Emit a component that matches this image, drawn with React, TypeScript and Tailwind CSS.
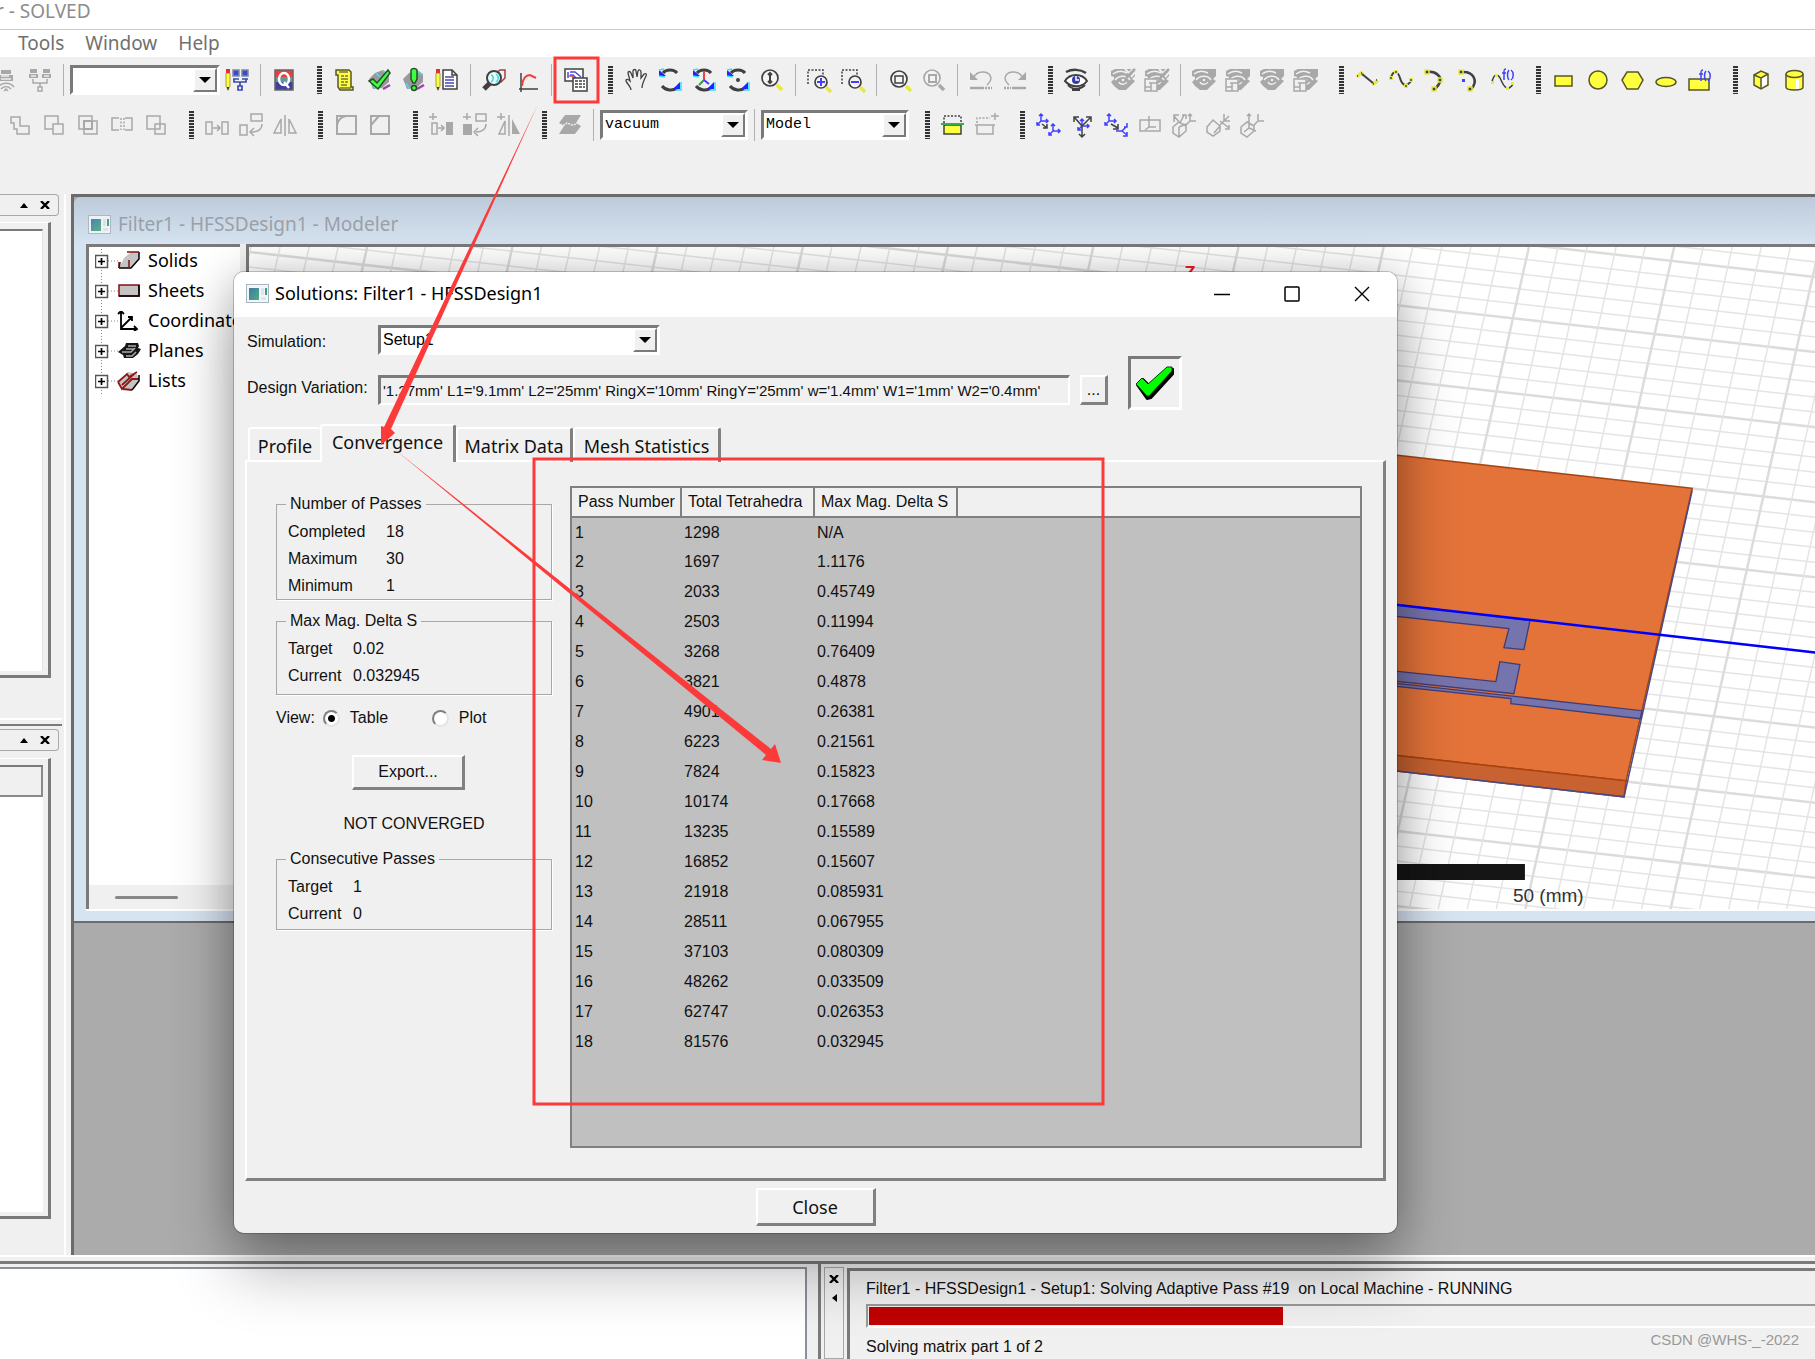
import type { ReactNode } from "react";

const G = "#a8a8a8";
const D = "#404040";
const B = "#4040ff";
const Y = "#ffff40";

const passes = [
  ["1", "1298", "N/A"],
  ["2", "1697", "1.1176"],
  ["3", "2033", "0.45749"],
  ["4", "2503", "0.11994"],
  ["5", "3268", "0.76409"],
  ["6", "3821", "0.4878"],
  ["7", "4901", "0.26381"],
  ["8", "6223", "0.21561"],
  ["9", "7824", "0.15823"],
  ["10", "10174", "0.17668"],
  ["11", "13235", "0.15589"],
  ["12", "16852", "0.15607"],
  ["13", "21918", "0.085931"],
  ["14", "28511", "0.067955"],
  ["15", "37103", "0.080309"],
  ["16", "48262", "0.033509"],
  ["17", "62747", "0.026353"],
  ["18", "81576", "0.032945"],
];

function Tool({ label, children }: { label: string; children: ReactNode }) {
  return (
    <button type="button" aria-label={label} className="flex h-9 w-[34px] shrink-0 items-center justify-center">
      <svg viewBox="0 0 24 24" className="h-6 w-6 overflow-visible" fill="none" strokeWidth="1.5">
        {children}
      </svg>
    </button>
  );
}

function Sep() {
  return <div className="mx-[6px] h-8 w-px shrink-0 bg-[#b0b0b0]" />;
}

function Grip() {
  return (
    <div className="mr-[6px] ml-4 h-7 w-[5px] shrink-0 bg-[repeating-linear-gradient(to_bottom,#333_0px,#333_2px,#e4e4e4_2px,#e4e4e4_3px)]" />
  );
}

function Combo({ id, label, value, className, mono }: { id: string; label?: string; value: string; className: string; mono?: boolean }) {
  return (
    <div className={`flex h-[30px] shrink-0 border-[3px] border-t-[#7a7a7a] border-r-white border-b-white border-l-[#7a7a7a] bg-white ${className}`}>
      <select
        id={id}
        aria-label={label}
        className={`min-w-0 flex-1 appearance-none bg-white text-black outline-none ${mono ? "pl-0.5 font-['Liberation_Mono',monospace] text-[15px]" : "pl-0.5 text-base"}`}
      >
        <option>{value}</option>
      </select>
      <span className="flex w-6 items-center justify-center border-2 border-t-white border-r-[#7a7a7a] border-b-[#7a7a7a] border-l-white bg-[#f0f0f0]">
        <svg viewBox="0 0 12 6" className="h-[6px] w-3">
          <path d="M0 0h12L6 6z" fill="#000" />
        </svg>
      </span>
    </div>
  );
}

function AppIcon({ faded }: { faded?: boolean }) {
  return (
    <svg viewBox="0 0 23 19" className={`h-[19px] w-[23px] shrink-0 ${faded ? "opacity-90" : ""}`}>
      <defs>
        <linearGradient id="scr" x1="0" y1="0" x2="1" y2="1">
          <stop offset="0" stopColor="#3c7ba8" />
          <stop offset="1" stopColor="#4fae7c" />
        </linearGradient>
      </defs>
      <rect x="0.5" y="0.5" width="22" height="18" fill="#f3f6f9" stroke="#a9b4be" />
      <rect x="3" y="4" width="10" height="12" fill="url(#scr)" />
      <path d="M15 4h3v7h-3zM15 13h5v3h-5z" fill="#e0e4e8" />
      <path d="M20 4v7" stroke="#3f9a86" strokeWidth="2" />
    </svg>
  );
}

/* pieces shared by the toolbar glyphs */
const Eye = () => (
  <g>
    <path d="M0 3l4-2h20v7l-3 3 3 2-5 5-4 4H8l-5-4-3-4 3-3V9L0 8z" fill={G} />
    <path d="M2 6c5-4 10-3 14-1" stroke="#f0f0f0" strokeWidth="1.6" />
    <path d="M4 12c4-5 12-5 15 0" stroke="#f0f0f0" strokeWidth="1.6" />
    <path d="M8 14c1 3 6 3 8 0" stroke="#f0f0f0" strokeWidth="1.3" />
    <circle cx="12" cy="12" r="1.3" fill="#f0f0f0" />
  </g>
);
const Block = () => <path d="M0 11h12v12H0zM4 15h8M6 15v8M0 19h6" fill="#f0f0f0" stroke={G} />;
const CloseMark = () => (
  <g stroke={G}>
    <path d="M14 1l4 4 4-4M20 9l5-6" stroke="#f0f0f0" strokeWidth="2" />
    <path d="M15 10l9-9" strokeWidth="2.5" />
  </g>
);
const Axis = ({ x, y, c }: { x: number; y: number; c: string }) => (
  <path
    d="M0 -7v7h7M0 0l-4 4M-2 -5l2 -2 2 2M5 -2l2 2-2 2M-4 1v3h3"
    transform={`translate(${x} ${y})`}
    stroke={c}
  />
);
const Lens = ({ x, y, r, c, h }: { x: number; y: number; r: number; c: string; h: string }) => (
  <g>
    <path d={`M${x + r - 1} ${y + r - 1}l5 5`} stroke={h} strokeWidth="3.5" />
    <circle cx={x} cy={y} r={r} stroke={c} strokeWidth="1.7" fill="#f4f4f4" />
  </g>
);
const Spin = ({ children }: { children?: ReactNode }) => (
  <g>
    <path d="M5 5c3-4 11-4 14 0" stroke={D} strokeWidth="3" />
    <path d="M4 18c4 5 11 5 15 2" stroke={D} strokeWidth="3" />
    <path d="M1 2v6h7z" fill="#2222ff" />
    <path d="M1 2l5-1M1 8l6 1" stroke="#30e0ff" />
    <path d="M22 14v7h-7z" fill="#2222ff" />
    <path d="M23 14v8h-5" stroke="#30e0ff" />
    {children}
  </g>
);
const Cubes = () => (
  <g>
    <path d="M2 11l6-6 8-3 6 4v8l-7 6-9 1z" fill="#9a9a9a" />
    <path d="M5 15l3 5M9 5l4 4M16 3l5 4" stroke="#40e0f0" />
    <path d="M16 21l7-4" stroke="#a040b0" strokeWidth="2.5" />
  </g>
);
const Pencil = () => (
  <g>
    <path d="M1 5h4v13l-2 4-2-4z" fill={Y} stroke="#8a8a30" strokeWidth="0.8" />
    <path d="M1 1h4v4H1z" fill="#e03030" />
    <path d="M2 19h2l-1 4z" fill="#222" />
  </g>
);

function ToolbarOne() {
  return (
    <div className="-ml-[11px] flex h-[46px] items-center">
      <Tool label="Solve node">
        <path d="M7 2h10v4H7zM5 7h14v6H5z" fill={G} />
        <path d="M7 8h8M7 11h10" stroke="#eee" />
        <path d="M4 19c4-5 12-5 16 0M7 21c3-3 7-3 10 0M10 23l2-2 2 2" stroke={G} />
      </Tool>
      <Tool label="Distribute">
        <path d="M2 1h7v4H2zM15 1h7v4h-7zM1 6h9v4H1zM14 6h9v4h-9z" fill={G} />
        <path d="M5 11v4h14v-4M12 15v4M10 19h4v4h-4z" stroke={G} />
        <path d="M3 8h5M16 8h5" stroke="#eee" />
      </Tool>
      <Sep />
      <Combo id="machine" label="Machine" value="" className="w-[150px]" />
      <Tool label="Edit configuration">
        <Pencil />
        <path d="M8 2h6v6H8zM17 2h6v6h-6z" fill="#3a4ad0" stroke="#8088a0" />
        <path d="M9 11v3h12v-3M15 14v4M13 18h4v4h-4zM8 11h6M17 11h6" stroke="#3a4ab0" strokeWidth="1.7" />
      </Tool>
      <Sep />
      <Tool label="Queue">
        <path d="M3 2h18v7H3z" fill="#f03c3c" />
        <path d="M3 9h18v5H3z" fill="#5a9c98" />
        <path d="M3 14h18v8H3z" fill="#40409c" />
        <path d="M3 2h18v20H3z" stroke="#666" />
        <ellipse cx="12" cy="11" rx="5" ry="6" stroke="#fff" strokeWidth="2.5" />
        <path d="M12 14l5 6" stroke="#fff" strokeWidth="2.5" />
      </Tool>
      <Grip />
      <Tool label="Log">
        <path d="M3 2h13l2 2v15h2v3H7l-2-3V7H3z" fill={Y} stroke="#55552a" />
        <path d="M6 4h9M8 8h3M12 8h3M8 11h7M8 14h3M12 14h3M8 17h6M7 20h11" stroke="#77773a" />
      </Tool>
      <Tool label="Validate">
        <Cubes />
        <path d="M2 13l4-2 4 4L21 2l2 3L11 21z" fill="#40ff40" stroke="#265026" />
      </Tool>
      <Tool label="Analyze">
        <Cubes />
        <path d="M10 2c1-2 5-2 6 0v9l-2 4h-2l-2-4z" fill="#40ff40" stroke="#265026" />
        <circle cx="13" cy="20" r="2.5" fill="#40ff40" stroke="#265026" />
      </Tool>
      <Tool label="Notes">
        <Pencil />
        <path d="M8 2h9l5 5v14H8z" fill="#fff" stroke={D} />
        <path d="M17 2v5h5" stroke={D} />
        <path d="M10 9h9M10 12h9M10 15h9M10 18h9" stroke="#4a4ab0" />
      </Tool>
      <Sep />
      <Tool label="Inspect">
        <path d="M14 5l4-3h5v8l-4 4z" stroke="#a04040" />
        <path d="M9 14l-7 7" stroke={D} strokeWidth="5" />
        <circle cx="12" cy="10" r="7" stroke={D} strokeWidth="2" fill="#e8fbfb" />
        <path d="M9 7c3 1 3 5 0 7M14 6c3 2 3 6 0 8" stroke="#40d8e8" />
      </Tool>
      <Tool label="Report">
        <path d="M5 5v19M3 21h19" stroke={D} />
        <path d="M6 18c1-9 4-11 8-11l6 3" stroke="#f04040" strokeWidth="2" />
      </Tool>
      <Sep />
      <Tool label="Solution data">
        <path d="M2 1h18v12H2z" stroke={D} fill="#fff" />
        <path d="M5 4v6M7 4h5l6 5M7 7h3l3 3" stroke="#4a4ae0" />
        <path d="M6 8h3l3 3" stroke="#f04040" />
        <path d="M10 10h14v13H10z" stroke={D} fill="#fff" />
        <path d="M12 13h10M12 16h10M12 19h10" stroke={D} strokeDasharray="3 1" />
      </Tool>
      <Grip />
      <Tool label="Pan">
        <path d="M7 22c0-4-6-8-5-10s4 1 4 1L4 5c0-2 2-2 3 0l2 5V3c0-2 3-2 3 0l1 6 1-6c1-2 3-1 3 1v6l3-4c2-1 3 0 2 2-2 4-4 8-4 12" stroke={D} strokeWidth="1.3" />
      </Tool>
      <Tool label="Rotate around model center">
        <Spin />
      </Tool>
      <Tool label="Rotate around current axis">
        <Spin>
          <path d="M12 3v10" stroke="#f04040" strokeWidth="2" />
          <path d="M12 12l-5 5" stroke="#30a030" strokeWidth="2" />
          <path d="M12 12l5 4" stroke="#4040ff" strokeWidth="2" />
        </Spin>
      </Tool>
      <Tool label="Rotate around screen center">
        <Spin>
          <circle cx="12" cy="12" r="2" fill={D} />
        </Spin>
      </Tool>
      <Tool label="Dynamic zoom">
        <Lens x={10} y={10} r={8} c={D} h="#e8e840" />
        <path d="M10 5v10M8 7l2-2 2 2M8 13l2 2 2-2" stroke={D} strokeWidth="2" />
      </Tool>
      <Sep />
      <Tool label="Zoom in">
        <path d="M1 16V2h15v5" stroke={D} strokeDasharray="2 1.5" />
        <Lens x={14} y={14} r={6} c={D} h="#e8e840" />
        <path d="M14 10v8M10 14h8" stroke={B} strokeWidth="2" />
      </Tool>
      <Tool label="Zoom out">
        <path d="M1 16V2h15v5" stroke={D} strokeDasharray="2 1.5" />
        <Lens x={14} y={14} r={6} c={D} h="#e8e840" />
        <path d="M10 14h8" stroke={B} strokeWidth="2" />
      </Tool>
      <Sep />
      <Tool label="Fit all">
        <Lens x={11} y={11} r={8} c={D} h="#e8e840" />
        <path d="M7 8h8v7H7z" stroke={D} />
      </Tool>
      <Tool label="Fit selection">
        <Lens x={10} y={10} r={8} c={G} h={G} />
        <path d="M7 7h7v7H7z" stroke={G} strokeWidth="2" />
      </Tool>
      <Sep />
      <Tool label="Undo">
        <path d="M4 10c5-9 17-7 18 0 0 4-2 5-4 7" stroke={G} />
        <path d="M1 4v8h8z" fill={G} />
        <path d="M1 20h14" stroke={G} strokeWidth="2.5" />
        <path d="M16 20h7" stroke={G} strokeDasharray="2 1" strokeWidth="2.5" />
      </Tool>
      <Tool label="Redo">
        <path d="M20 10C15 1 3 3 2 10c0 4 2 5 4 7" stroke={G} />
        <path d="M23 4v8h-8z" fill={G} />
        <path d="M9 20h14" stroke={G} strokeWidth="2.5" />
        <path d="M1 20h7" stroke={G} strokeDasharray="2 1" strokeWidth="2.5" />
      </Tool>
      <Grip />
      <Tool label="Visibility">
        <path d="M2 4c6-3 14-3 20 1" stroke={D} strokeWidth="2.5" />
        <path d="M1 13c5-8 17-8 22 0-5 7-16 7-22 0z" fill="#fff" stroke={D} strokeWidth="2" />
        <circle cx="12" cy="12" r="4" fill="#3a3ab0" />
        <path d="M12 8v4h3" stroke="#fff" />
        <path d="M4 17c4 5 12 5 17 0M8 22h8" stroke={D} strokeWidth="2" />
      </Tool>
      <Sep />
      <Tool label="Hide selection">
        <Eye />
        <CloseMark />
      </Tool>
      <Tool label="Hide selection in active view">
        <Eye />
        <CloseMark />
        <Block />
      </Tool>
      <Sep />
      <Tool label="Show selection">
        <Eye />
      </Tool>
      <Tool label="Show selection in active view">
        <Eye />
        <Block />
      </Tool>
      <Tool label="Show all">
        <Eye />
      </Tool>
      <Tool label="Show all in active view">
        <Eye />
        <Block />
      </Tool>
      <Grip />
      <Tool label="Draw line">
        <path d="M2 9l4-4 2 2M17 16l3-1 3-3" stroke="#e8e840" strokeWidth="3.5" />
        <path d="M7 6l11 9" stroke={D} strokeWidth="2" />
        <path d="M2 8h1M6 5h1M18 16h1M21 12h1" stroke={D} />
      </Tool>
      <Tool label="Draw spline">
        <path d="M2 10c2-8 7-7 9 0s6 10 11 3" stroke={D} strokeWidth="2" />
        <path d="M0 8h4v4H0zM5 2h4v4H5zM15 16h4v4h-4zM20 10h4v4h-4z" fill="#e8e840" />
        <path d="M1 10h2M6 4h2M16 18h2M21 12h2" stroke={D} />
      </Tool>
      <Tool label="Draw arc">
        <path d="M5 4c8-1 14 5 12 10-1 3-3 5-5 7" stroke={D} strokeWidth="2.5" />
        <path d="M2 2h4v4H2zM15 10h4v4h-4zM9 19h4v4H9z" fill={D} stroke="#e8e840" />
      </Tool>
      <Tool label="Draw center arc">
        <path d="M5 4c11-1 17 9 9 17" stroke={D} strokeWidth="2.5" />
        <path d="M2 2h4v4H2zM11 19h4v4h-4z" fill={D} stroke="#e8e840" />
        <path d="M5 11h3v3H5z" fill={B} />
      </Tool>
      <Tool label="Draw equation curve">
        <path d="M1 14c2-9 6-9 9-2s7 12 12 4" stroke={D} />
        <path d="M0 13h3v3H0zM4 6h3v3H4zM15 19h3v3h-3zM20 14h3v3h-3z" fill="#e8e840" />
        <path d="M15 1c-2 0-2 1-2 3v8M11 5h4M18 2c-2 2-2 8 0 10M20 2c3 2 3 8 0 10" stroke={B} />
      </Tool>
      <Grip />
      <Tool label="Draw rectangle">
        <path d="M3 8h17v10H3z" fill={Y} stroke="#55552a" />
      </Tool>
      <Tool label="Draw circle">
        <circle cx="12" cy="12" r="9" fill={Y} stroke="#55552a" />
      </Tool>
      <Tool label="Draw regular polygon">
        <path d="M7 4h11l5 8-5 9H7l-5-9z" fill={Y} stroke="#55552a" />
      </Tool>
      <Tool label="Draw ellipse">
        <ellipse cx="12" cy="14" rx="10" ry="4.5" fill={Y} stroke="#55552a" />
      </Tool>
      <Tool label="Draw equation surface">
        <path d="M1 11h20v11H1z" fill={Y} stroke="#55552a" />
        <path d="M15 2c-2 0-2 1-2 3v8M11 6h4M18 3c-2 2-2 8 0 10M20 3c3 2 3 8 0 10" stroke={B} />
      </Tool>
      <Grip />
      <Tool label="Draw box">
        <path d="M5 7l7-4 7 3v11l-7 4-7-4z" fill={Y} stroke="#55552a" />
        <path d="M12 10l6-3v9l-6 4z" fill="#fff" />
        <path d="M5 7l7 3 7-4M12 10v11" stroke="#55552a" />
      </Tool>
      <Tool label="Draw cylinder">
        <path d="M3 6v13c0 4 17 4 17 0V6" fill={Y} stroke="#55552a" />
        <path d="M13 11h3v10h-3z" fill="#fff" />
        <ellipse cx="11.5" cy="6" rx="8.5" ry="3.5" fill={Y} stroke="#55552a" />
      </Tool>
    </div>
  );
}

function ToolbarTwo() {
  return (
    <div className="ml-[3px] flex h-[44px] items-center">
      <Tool label="Unite">
        <path d="M3 4h9v9h9v8H9v-5H6v-6H3z" stroke={G} />
      </Tool>
      <Tool label="Subtract">
        <path d="M3 3h13v8h5v10H11v-5H3zM11 16v-5h5" stroke={G} />
      </Tool>
      <Tool label="Intersect">
        <path d="M3 3h13v13H3zM8 8h13v13H8z" stroke={G} />
        <path d="M8 8h8v8H8z" stroke={G} strokeWidth="2" />
      </Tool>
      <Tool label="Split">
        <path d="M9 5H2v12h7M15 5h7v12h-7" stroke={G} />
        <path d="M11 5v12M14 5v12" stroke={G} strokeDasharray="2 1.5" />
      </Tool>
      <Tool label="Imprint">
        <path d="M3 3h13v13H3zM11 11h10v10H11zM11 11h5v5h-5z" stroke={G} />
      </Tool>
      <Grip />
      <Tool label="Move">
        <path d="M1 9h6v12H1zM17 9h6v12h-6zM8 15h7M12 12l3 3-3 3" stroke={G} />
      </Tool>
      <Tool label="Rotate">
        <path d="M12 1h11v7H12zM1 12h7v10H1zM23 11c0 5-4 8-11 8M15 15l-4 4 4 4" stroke={G} />
      </Tool>
      <Tool label="Mirror">
        <path d="M8 6v14H1zM16 6v14h7zM12 2v21" stroke={G} />
      </Tool>
      <Grip />
      <Tool label="Fillet">
        <path d="M3 3h19v18H3zM3 12c1-6 4-8 9-9" stroke={G} strokeWidth="2" />
      </Tool>
      <Tool label="Chamfer">
        <path d="M3 3h18v18H3zM3 12l8-9" stroke={G} strokeWidth="2" />
      </Tool>
      <Grip />
      <Tool label="Duplicate along line">
        <path d="M4 0v7M0 4h8M3 10h5v11H3zM9 15h6M12 12l3 3-3 3" stroke={G} />
        <path d="M17 9h7v13h-7z" fill={G} />
      </Tool>
      <Tool label="Duplicate around axis">
        <path d="M4 0v7M0 4h8M13 1h10v7H13zM23 11c0 5-4 8-10 8M15 15l-4 4 4 4" stroke={G} />
        <path d="M0 11h9v11H0z" fill={G} />
      </Tool>
      <Tool label="Duplicate mirror">
        <path d="M4 0v7M0 4h8M8 8v13H2zM12 2v21" stroke={G} />
        <path d="M15 6v15h8z" fill={G} />
      </Tool>
      <Grip />
      <Tool label="Thicken sheet">
        <path d="M7 2h16l-5 8 5 3-6 8H1l5-8-5-3z" fill={G} />
        <path d="M2 12h5l2-2 5 2 5-1" stroke="#eee" strokeDasharray="2 1" />
      </Tool>
      <Sep />
      <Combo id="material" label="Material" value="vacuum" className="w-[148px]" mono />
      <Sep />
      <Combo id="model-type" label="Model type" value="Model" className="w-[148px]" mono />
      <Grip />
      <Tool label="Section">
        <path d="M3 10V3h17v7" stroke={D} strokeDasharray="2 1.5" />
        <path d="M3 12h17v9H3z" fill={Y} stroke={D} />
        <path d="M0 11h23" stroke="#30b050" strokeWidth="2" />
      </Tool>
      <Tool label="Add section">
        <path d="M2 10V5h13" stroke={G} strokeDasharray="2 1.5" />
        <path d="M2 12h16v9H2zM0 12h20M20 0v7M16 3h8" stroke={G} />
      </Tool>
      <Grip />
      <Tool label="Offset coordinate system">
        <Axis x={5} y={8} c={B} />
        <Axis x={17} y={18} c={B} />
        <path d="M6 11l5 4M11 11v4H7" stroke={D} />
      </Tool>
      <Tool label="Rotated coordinate system">
        <Axis x={12} y={13} c={B} />
        <path d="M12 13L5 5M12 13l8-8M12 13v10M4 9V4h5M16 4h5v5M9 21l3 3 3-3" stroke={D} />
      </Tool>
      <Tool label="Offset and rotated coordinate system">
        <Axis x={5} y={8} c={B} />
        <path d="M7 11l7 4M14 11v5H9" stroke={D} />
        <path d="M23 13l-5 5 5 4M18 18h-6M23 10v4h-3M23 19v4h-4" stroke={B} />
      </Tool>
      <Tool label="Face coordinate system">
        <path d="M2 7h20v11H2zM11 3v11h7M11 14l-4 3" stroke={G} />
      </Tool>
      <Tool label="Edge coordinate system">
        <path d="M1 14l6-5 7 4v5l-7 6-6-4zM7 14l7-3M7 14v9M2 9V2h5M2 3l6 7M12 2l-4 8M10 2h4v4M18 1v7h6M18 8l-4 4M16 3l2-2 2 2" stroke={G} />
      </Tool>
      <Tool label="Object coordinate system">
        <path d="M1 14l6-7 7 6v5l-7 5-6-4zM14 13l-6 7M18 1v7h6M23 3l-9 9M14 8l9 7M23 12v4h-4" stroke={G} />
      </Tool>
      <Tool label="Relative coordinate system">
        <path d="M1 14l6-5 7 4v5l-7 6-6-4zM9 1v14l-5 4M9 15l7 3M18 1v7h6M18 8l-4 4M7 3l2-2 2 2" stroke={G} />
      </Tool>
    </div>
  );
}

function DockHeader() {
  return (
    <div className="flex h-[22px] w-[59px] items-center justify-end gap-3 rounded-r-sm border border-l-0 border-[#a8a8a8] pr-2">
      <button type="button" aria-label="Expand">
        <svg viewBox="0 0 8 5" className="h-[5px] w-2">
          <path d="M0 5l4-5 4 5z" />
        </svg>
      </button>
      <button type="button" aria-label="Close panel">
        <svg viewBox="0 0 10 8" className="h-2 w-[10px]" stroke="#000" strokeWidth="2.4">
          <path d="M1 0l8 8M9 0L1 8" />
        </svg>
      </button>
    </div>
  );
}

function LeftDock() {
  return (
    <div className="flex w-[66px] shrink-0 flex-col border-r-2 border-white">
      <DockHeader />
      <div className="mt-[6px] h-[456px] w-[51px] border-t border-r-[3px] border-b-[3px] border-t-white border-r-[#7a7a7a] border-b-[#7a7a7a] pt-[6px] pr-[5px] pb-1">
        <div className="h-full border-t-2 border-r border-t-[#7a7a7a] border-r-[#e4e4e4] bg-white" />
      </div>
      <div className="mt-[40px] mb-[3px] h-[8px] w-[62px] border-t-2 border-b-2 border-t-white border-b-[#7a7a7a]" />
      <DockHeader />
      <div className="mt-[7px] h-[461px] w-[51px] border-t border-r-[3px] border-b-[3px] border-t-white border-r-[#7a7a7a] border-b-[#7a7a7a] pt-[6px] pr-[5px] pb-1">
        <div className="h-full border-t-2 border-t-[#7a7a7a] bg-white">
          <div className="h-[30px] border-r-2 border-b-2 border-[#8a8a8a] bg-[#f0f0f0]" />
        </div>
      </div>
    </div>
  );
}

const treeItems: { name: string; icon: ReactNode }[] = [
  {
    name: "Solids",
    icon: (
      <>
        <path d="M2 17L7 7l7-6h8v6l-8 10z" fill="#c4c4c4" />
        <path d="M2 17h12l8-9V1M2 17l1-6" stroke="#000" />
        <path d="M10 1h12M2 11v6M12 9v7" stroke="#801010" />
      </>
    ),
  },
  {
    name: "Sheets",
    icon: (
      <>
        <path d="M2 4h20v11H2z" fill="#c4c4c4" stroke="#801010" />
        <path d="M2 15h20V4" stroke="#000" />
      </>
    ),
  },
  {
    name: "Coordinate Systems",
    icon: <path d="M4 0v18h16M1 3l3-3 3 3M17 15l3 3-3 2M4 17L15 6M11 6h4v4" stroke="#000" strokeWidth="1.8" />,
  },
  {
    name: "Planes",
    icon: (
      <>
        <path d="M1 11l7-6 1-3h12l1 3-1 2 3 1-3 5-5 4H7l-1-3z" fill="#161616" />
        <path d="M5 11h9l4-4M9 8h8M11 5h8M9 15h6l4-4" stroke="#aaa" />
      </>
    ),
  },
  {
    name: "Lists",
    icon: (
      <>
        <path d="M1 11L11 1l9 2 2 7-8 9-9-1z" fill="#c4c4c4" />
        <path d="M1 11l4 7 10-10h7M1 11l9-8 2 3 8-5M5 14L17 3M6 18l9 1" stroke="#901818" strokeWidth="1.8" />
        <path d="M15 19l7-9V4" stroke="#000" />
      </>
    ),
  },
];

function ModelTree() {
  return (
    <div className="flex w-[154px] shrink-0 flex-col border-t-[3px] border-l-[3px] border-[#7a7a7a] bg-white">
      <ul className="-mt-px flex-1 overflow-hidden">
        {treeItems.map((t) => (
          <li key={t.name} className="flex h-[30px] items-center">
            <button type="button" aria-label={`Expand ${t.name}`} className="ml-[6px] shrink-0">
              <svg viewBox="0 0 24 30" className="block h-[30px] w-6" fill="none">
                <path d="M6.5 0v30M13 15h11" stroke="#888" strokeDasharray="1 2" />
                <path d="M.5 9.500h12v12H.5z" fill="#fff" stroke="#555" strokeWidth="1.5" />
                <path d="M3 15.500h7M6.500 12v7" stroke="#000" strokeWidth="1.7" />
              </svg>
            </button>
            <svg viewBox="0 0 24 20" className="-ml-0.5 h-5 w-6 shrink-0" fill="none" strokeWidth="1.5">
              {t.icon}
            </svg>
            <span className="ml-[7px] pb-0.5 font-['Noto_Sans',sans-serif] text-lg whitespace-nowrap text-black">{t.name}</span>
          </li>
        ))}
      </ul>
      <div className="flex h-6 items-center bg-[#f0f0f0] pl-[26px]">
        <div className="h-[3px] w-[63px] rounded bg-[#888]" />
      </div>
    </div>
  );
}

function Viewport() {
  const rows = Array.from({ length: 66 }, (_, i) => i - 34);
  const cols = Array.from({ length: 72 }, (_, i) => i - 50);
  return (
    <div className="min-w-0 flex-1 overflow-hidden border-t-[3px] border-l-[3px] border-[#7a7a7a] bg-white">
      <svg viewBox="250 247 1565 661" preserveAspectRatio="xMinYMin slice" className="h-full w-full" fill="none">
        {rows.map((k) => (
          <path
            key={`r${k}`}
            d={`M215 ${652 + 15 * k - 179}L1815 ${652 + 15 * k}`}
            stroke={k % 5 === 0 ? "#dcdcdc" : "#e4e4e4"}
            strokeWidth={k % 5 === 0 ? 2.5 : 1.5}
          />
        ))}
        {cols.map((k) => (
          <path
            key={`c${k}`}
            d={`M${1673 + 29 * k} 247L${1673 + 29 * k - 149} 910`}
            stroke={k % 5 === 0 ? "#dcdcdc" : "#e4e4e4"}
            strokeWidth={k % 5 === 0 ? 2.5 : 1.5}
          />
        ))}
        <path d="M1200 433L1691 488L1625 780L1200 733z" fill="#e37339" stroke="#a8430e" strokeWidth="1.5" />
        <path d="M1200 733L1625 780L1623 796L1200 748z" fill="#c86231" stroke="#a8430e" strokeWidth="1.5" />
        <path d="M1200 748L1623 796L1691 490" stroke="#4a4a88" strokeWidth="1.5" />
        <g fill="#7674ac" stroke="#3f3c78" strokeWidth="1.3">
          <path d="M1380 602l149 18-6 29-20-2 5-19-128-14z" />
          <path d="M1380 669l115 12 4-20 20 3-6 29-133-14z" />
          <path d="M1380 681l136 15 125 14-2 8-129-15v-5l-130-14z" />
        </g>
        <path d="M1200 582L1815 652" stroke="#0000ff" strokeWidth="2.5" />
        <path d="M1200 863h324v16h-324z" fill="#151515" />
        <text x="1512" y="901" fontSize="19" fill="#333" className="font-['Liberation_Sans',sans-serif]">
          50 (mm)
        </text>
        <text x="1184" y="279" fontSize="18" fontWeight="bold" fill="#ee1c1c" className="font-['Liberation_Sans',sans-serif]">
          Z
        </text>
      </svg>
    </div>
  );
}

function Group({ title, rows, wide, className }: { title: string; rows: string[][]; wide?: boolean; className: string }) {
  return (
    <fieldset className={`border border-[#a8a8a8] pl-[11px] shadow-[1px_1px_0_#fff] ${className}`}>
      <legend className="-ml-[2px] px-1 leading-6">{title}</legend>
      <dl className="pt-0.5">
        {rows.map(([k, v]) => (
          <div key={k} className="flex leading-[27px]">
            <dt className={wide ? "w-[98px]" : "w-[65px]"}>{k}</dt>
            <dd>{v}</dd>
          </div>
        ))}
      </dl>
    </fieldset>
  );
}

const radioClass =
  "mx-2 h-[17px] w-[17px] appearance-none rounded-full border-2 border-t-[#808080] border-r-[#e4e4e4] border-b-[#e4e4e4] border-l-[#808080] bg-white checked:bg-[radial-gradient(circle,#000_3px,#fff_4px)]";

const raised = "border-t-2 border-r-[3px] border-b-[3px] border-l-2 border-t-white border-r-[#808080] border-b-[#808080] border-l-white bg-[#f0f0f0]";

function ConvergencePanel() {
  return (
    <div className="flex flex-1 border-t-2 border-r-[3px] border-b-[3px] border-l-2 border-t-white border-r-[#808080] border-b-[#808080] border-l-white">
      <div className="ml-[29px] w-[276px] shrink-0 pt-[30px]">
        <Group
          title="Number of Passes"
          rows={[
            ["Completed", "18"],
            ["Maximum", "30"],
            ["Minimum", "1"],
          ]}
          wide
          className=""
        />
        <Group
          title="Max Mag. Delta S"
          rows={[
            ["Target", "0.02"],
            ["Current", "0.032945"],
          ]}
          className="mt-[9px] pb-[5px]"
        />
        <div className="mt-2 flex h-[30px] items-center">
          <span>View:</span>
          <input type="radio" id="view-table" name="view" defaultChecked className={radioClass} />
          <label htmlFor="view-table" className="w-[76px] pl-0.5">
            Table
          </label>
          <input type="radio" id="view-plot" name="view" className={radioClass} />
          <label htmlFor="view-plot" className="pl-0.5">
            Plot
          </label>
        </div>
        <button type="button" className={`mt-[22px] ml-[76px] h-[35px] w-[113px] ${raised}`}>
          Export...
        </button>
        <p className="mt-[22px] text-center leading-6">NOT CONVERGED</p>
        <Group
          title="Consecutive Passes"
          rows={[
            ["Target", "1"],
            ["Current", "0"],
          ]}
          className="mt-[11px] pb-0.5"
        />
      </div>
      <div className="mt-6 mr-[21px] mb-[30px] ml-[18px] flex-1 border-2 border-[#808080] bg-[#c0c0c0]">
        <table className="w-full table-fixed border-collapse text-left">
          <thead>
            <tr className="h-[29px] bg-[#f0f0f0]">
              <th className="w-[109px] border-r-2 border-b-2 border-[#808080] pl-[6px] font-normal">Pass Number</th>
              <th className="w-[133px] border-r-2 border-b-2 border-[#808080] pl-[6px] font-normal">Total Tetrahedra</th>
              <th className="w-[143px] border-r-2 border-b-2 border-[#808080] pl-[6px] font-normal">Max Mag. Delta S</th>
              <th className="border-b-2 border-[#808080]" />
            </tr>
          </thead>
          <tbody>
            {passes.map((p) => (
              <tr key={p[0]} className="h-[30px]">
                <td className="pl-[3px]">{p[0]}</td>
                <td className="pl-[3px]">{p[1]}</td>
                <td className="pl-[3px]">{p[2]}</td>
                <td />
              </tr>
            ))}
          </tbody>
        </table>
      </div>
    </div>
  );
}

function SolutionsDialog() {
  const tab = "shrink-0 border-t-2 border-l-2 border-t-white border-l-white px-1 rounded-t-[3px]";
  return (
    <div
      role="dialog"
      aria-label="Solutions"
      className="absolute top-[272px] left-[234px] isolate flex h-[961px] w-[1163px] flex-col overflow-hidden rounded-[10px] bg-[#f0f0f0]"
    >
      <div className="flex h-[45px] shrink-0 items-center bg-white pb-0.5 pl-3">
        <AppIcon />
        <h1 className="ml-[6px] flex-1 pb-0.5 font-['Noto_Sans',sans-serif] text-lg text-black">Solutions: Filter1 - HFSSDesign1</h1>
        <button type="button" aria-label="Minimize" className="flex w-[70px] justify-center">
          <svg viewBox="0 0 16 16" className="h-4 w-4" stroke="#000" strokeWidth="1.3">
            <path d="M0 8.500h16" />
          </svg>
        </button>
        <button type="button" aria-label="Maximize" className="flex w-[70px] justify-center">
          <svg viewBox="0 0 16 16" className="h-4 w-4" stroke="#000" strokeWidth="1.5" fill="none">
            <rect x="1" y="1" width="14" height="14" rx="1" />
          </svg>
        </button>
        <button type="button" aria-label="Close window" className="flex w-[70px] justify-center">
          <svg viewBox="0 0 16 16" className="h-4 w-4" stroke="#000" strokeWidth="1.4">
            <path d="M1 1l14 14M15 1L1 15" />
          </svg>
        </button>
      </div>

      <div className="flex h-[107px] shrink-0 pl-[13px]">
        <div className="w-[861px] pt-2">
          <div className="flex items-center">
            <label htmlFor="simulation" className="w-[131px] pt-1">
              Simulation:
            </label>
            <Combo id="simulation" value="Setup1" className="w-[282px]" />
          </div>
          <div className="mt-5 flex items-center">
            <label htmlFor="variation" className="w-[131px] shrink-0 pb-1">
              Design Variation:
            </label>
            <input
              id="variation"
              readOnly
              value="'1.27mm' L1='9.1mm' L2='25mm' RingX='10mm' RingY='25mm' w='1.4mm' W1='1mm' W2='0.4mm'"
              className="h-[30px] min-w-0 flex-1 border-t-[3px] border-r-2 border-b-2 border-l-[3px] border-t-[#7a7a7a] border-r-white border-b-white border-l-[#7a7a7a] bg-[#f0f0f0] pl-0.5 text-[15px] outline-none"
            />
            <button type="button" className={`ml-[10px] h-[30px] w-7 leading-5 ${raised}`}>
              ...
            </button>
          </div>
        </div>
        <button
          type="button"
          aria-label="Validate solution"
          className="mt-[39px] ml-[20px] flex h-[54px] w-[54px] items-center justify-center border-[3px] border-t-[#7a7a7a] border-r-white border-b-white border-l-[#7a7a7a]"
        >
          <svg viewBox="0 0 42 36" className="h-9 w-[42px]" strokeLinejoin="round">
            <path d="M3 20l6-6 6 6L34 3l5 1v5L17 33l-4 1z" fill="#000" stroke="#000" strokeWidth="2" />
            <path d="M2 19l6-6 6 6L33 2h5v4L15 31h-2z" fill="#00ff00" stroke="#064006" strokeWidth="1" />
          </svg>
        </button>
      </div>

      <div className="flex flex-1 flex-col px-[11px]">
        <div role="tablist" className="z-10 -mb-0.5 flex items-end pl-[3px] font-['Noto_Sans',sans-serif] text-lg">
          <button type="button" role="tab" className={`h-[35px] w-[72px] ${tab}`}>
            Profile
          </button>
          <button
            type="button"
            role="tab"
            aria-selected="true"
            className={`h-[38px] w-[136px] border-r-[3px] border-r-[#808080] bg-[#f0f0f0] pb-1 ${tab}`}
          >
            Convergence
          </button>
          <button type="button" role="tab" className={`h-[35px] w-[117px] border-r-[3px] border-r-[#808080] whitespace-nowrap ${tab}`}>
            Matrix Data
          </button>
          <button type="button" role="tab" className={`h-[35px] w-[148px] border-r-[3px] border-r-[#808080] whitespace-nowrap ${tab}`}>
            Mesh Statistics
          </button>
        </div>
        <ConvergencePanel />
      </div>

      <div className="flex justify-center pt-[7px] pb-[7px]">
        <button type="button" className={`h-[38px] w-[120px] font-['Noto_Sans',sans-serif] text-lg leading-7 ${raised}`}>
          Close
        </button>
      </div>
    </div>
  );
}

function BottomDock() {
  return (
    <div className="flex h-[104px] shrink-0 flex-col border-t-2 border-white">
      <div className="h-[7px]" />
      <div className="flex flex-1 border-t-[3px] border-[#7a7a7a]">
        <div className="mt-[3px] w-[807px] border-t-2 border-r-2 border-[#8a9098] bg-white" />
        <div className="w-[14px] border-r-[3px] border-[#7a7a7a]" />
        <div className="mt-[3px] ml-[3px] flex w-[20px] flex-col items-center gap-[11px] border border-[#a8a8a8] pt-[7px]">
          <button type="button" aria-label="Close progress" className="flex">
            <svg viewBox="0 0 10 8" className="h-2 w-[10px]" stroke="#000" strokeWidth="2.4">
              <path d="M1 0l8 8M9 0L1 8" />
            </svg>
          </button>
          <button type="button" aria-label="Collapse progress" className="flex">
            <svg viewBox="0 0 5 8" className="h-2 w-[5px]">
              <path d="M5 0v8L0 4z" />
            </svg>
          </button>
        </div>
        <div className="mt-[4px] ml-[3px] min-w-0 flex-1 border-t-[3px] border-l-[3px] border-[#7a7a7a] pt-[6px] pl-4">
          <p className="leading-6 whitespace-pre">Filter1 - HFSSDesign1 - Setup1: Solving Adaptive Pass #19  on Local Machine - RUNNING</p>
          <div className="mt-[3px] h-6 border-2 border-r-0 border-t-[#999] border-b-white border-l-[#999] p-px">
            <div className="h-full w-[414px] bg-[#c00000]" />
          </div>
          <div className="flex justify-between pr-4 leading-6">
            <p className="pt-[7px]">Solving matrix part 1 of 2</p>
            <p className="text-[15px] text-[#999]">CSDN @WHS-_-2022</p>
          </div>
        </div>
      </div>
    </div>
  );
}

/* red marker strokes laid over the windows */
function Annotations() {
  return (
    <svg className="pointer-events-none absolute inset-0 h-full w-full" fill="none">
      <g stroke="#fc3a3a" strokeWidth="3">
        <rect x="555" y="58" width="43" height="44" />
        <rect x="534" y="459" width="569" height="645" />
      </g>
      <g fill="#fc3a3a">
        <path d="M538 104L391 429L395 433L381 445V426L384 427z" />
        <path d="M393 448L771 749L775 744L781 763L762 760L766 755z" />
      </g>
    </svg>
  );
}

export default function App() {
  return (
    <div className="relative flex h-screen flex-col overflow-hidden bg-[#f0f0f0] font-['Liberation_Sans',sans-serif] text-base text-[#111]">
      <header className="bg-white font-['Noto_Sans',sans-serif] text-[19px] text-[#8c8c8c]">
        <div className="h-[30px] border-b border-[#c8cccc] leading-[23px]">
          <span className="-ml-1">r - SOLVED</span>
        </div>
        <nav className="flex h-[27px] gap-[21px] pl-[18px] leading-[27px] text-[#707070]">
          <button type="button">Tools</button>
          <button type="button">Window</button>
          <button type="button">Help</button>
        </nav>
      </header>

      <div className="h-[137px] shrink-0 overflow-hidden">
        <ToolbarOne />
        <ToolbarTwo />
      </div>

      <main className="flex min-h-0 flex-1">
        <LeftDock />
        <div className="ml-[5px] min-w-0 flex-1 border-t-[3px] border-l-[3px] border-[#6b6b6b] bg-[#ababab]">
          <div className="rounded-tl-lg border-b-2 border-[#6b6b6b] bg-[#d6e3f0]">
            <div className="flex h-[47px] items-center rounded-tl-lg bg-linear-to-b from-[#bccada] to-[#d6e3f0] pt-2 pl-[14px]">
              <AppIcon faded />
              <span className="ml-[7px] font-['Noto_Sans',sans-serif] text-[19px] text-[#9aa0a8]">Filter1 - HFSSDesign1 - Modeler</span>
            </div>
            <div className="ml-3 flex h-[667px] gap-[6px] border-b-2 border-white bg-[#f0f0f0]">
              <ModelTree />
              <Viewport />
            </div>
            <div className="h-[10px]" />
          </div>
        </div>
      </main>

      <BottomDock />
      <div className="pointer-events-none absolute top-[272px] left-[234px] h-[961px] w-[1163px] rounded-[10px] shadow-[0_36px_64px_rgba(0,0,0,0.3),0_0_40px_rgba(0,0,0,0.2),0_0_0_1px_rgba(0,0,0,0.2)]" />
      <SolutionsDialog />
      <Annotations />
    </div>
  );
}
